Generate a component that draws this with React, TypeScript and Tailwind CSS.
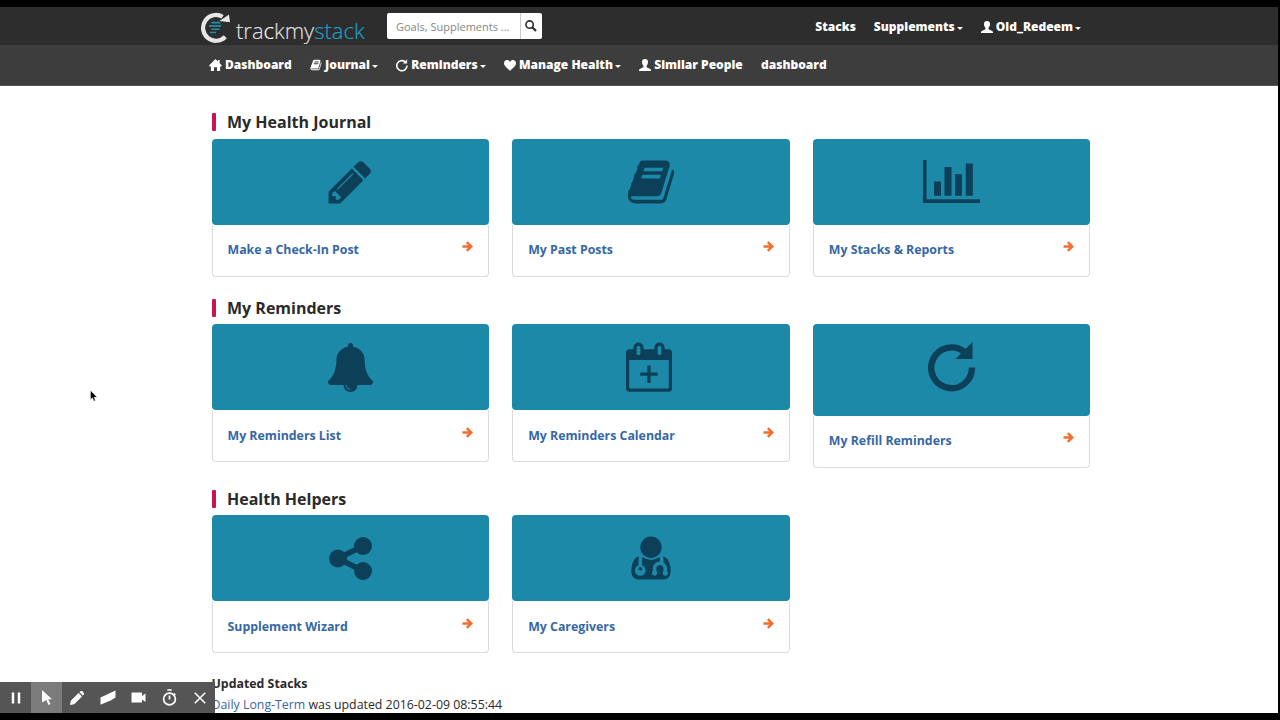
import type { ReactNode } from 'react';
import { clsx } from 'clsx';

type IconProps = { className?: string };

function Glyph({ d, className }: IconProps & { d: string }) {
  return (
    <svg viewBox="0 0 1792 1792" fill="currentColor" className={clsx('shrink-0', className)}>
      <path d={d} />
    </svg>
  );
}

const PENCIL =
  'M491 1536l91-91-235-235-91 91v107h128v128h107zm523-928q0-22-22-22-10 0-17 7l-542 542q-7 7-7 17 0 22 22 22 10 0 17-7l542-542q7-7 7-17zm-54-192l416 416-832 832h-416v-416zm683 96q0 53-37 90l-166 166-416-416 166-165q36-38 90-38 53 0 91 38l235 234q37 39 37 91z';
const BOOK =
  'M1703 478q40 57 18 129l-275 906q-19 64-76.5 107.5t-122.5 43.5h-923q-77 0-148.5-53.5t-99.5-131.5q-24-67-2-127 0-4 3-27t4-37q1-8-3-21.5t-3-19.5q2-11 8-21t16.5-23.5 16.5-23.5q23-38 45-91.5t30-91.5q3-10 .5-30t-.5-28q3-11 17-28t17-23q21-36 42-92t25-90q1-9-2.5-32t.5-28q4-13 22-30.5t22-22.5q19-26 42.5-84.5t27.5-96.5q1-8-3-25.5t-2-26.5q2-8 9-18t18-23 17-21q8-12 16.5-30.5t15-35 16-36 19.5-32 26.5-23.5 36-11.5 47.5 5.5l-1 3q38-9 51-9h761q74 0 114 56t18 130l-274 906q-36 119-71.5 153.5t-128.5 34.5h-869q-27 0-38 15-11 16-1 43 24 70 144 70h923q29 0 56-15.5t35-41.5l300-987q7-22 5-57 38 15 59 43zm-1064 2q-4 13 2 22.5t20 9.5h608q13 0 25.5-9.5t16.5-22.5l21-64q4-13-2-22.5t-20-9.5h-608q-13 0-25.5 9.5t-16.5 22.5zm-83 256q-4 13 2 22.5t20 9.5h608q13 0 25.5-9.5t16.5-22.5l21-64q4-13-2-22.5t-20-9.5h-608q-13 0-25.5 9.5t-16.5 22.5z';
const BELL =
  'M912 1696q0-16-16-16-59 0-101.5-42.5t-42.5-101.5q0-16-16-16t-16 16q0 73 51.5 124.5t124.5 51.5q16 0 16-16zm816-288q0 52-38 90t-90 38h-448q0 106-75 181t-181 75-181-75-75-181h-448q-52 0-90-38t-38-90q50-42 91-88t85-119.5 74.5-158.5 50-206 19.5-260q0-152 117-282.5t307-158.5q-8-19-8-39 0-40 28-68t68-28 68 28 28 68q0 20-8 39 190 28 307 158.5t117 282.5q0 139 19.5 260t50 206 74.5 158.5 85 119.5 91 88z';
const DOCTOR =
  'M576 1280q0 26-19 45t-45 19-45-19-19-45 19-45 45-19 45 19 19 45zm1024 121q0 121-73 192t-194 71h-874q-121 0-194-71t-73-192q0-68 5.5-131t24-138 47.5-132.5 81-103 120-60.5q-22 52-22 120v203q-58 20-93 70t-35 111q0 80 56 136t136 56 136-56 56-136q0-61-35.5-111t-92.5-70v-203q0-62 25-93 132 104 295 104t295-104q25 31 25 93v64q-106 0-181 75t-75 181v89q-32 29-32 71 0 40 28 68t68 28 68-28 28-68q0-42-32-71v-89q0-52 38-90t90-38 90 38 38 90v89q-32 29-32 71 0 40 28 68t68 28 68-28 28-68q0-42-32-71v-89q0-68-34.5-127.5t-93.5-93.5q0-10 .5-42.5t0-48-2.5-41.5-7-47-13-40q68 15 120 60.5t81 103 47.5 132.5 24 138 5.5 131zm-320-889q0 159-112.5 271.5t-271.5 112.5-271.5-112.5-112.5-271.5 112.5-271.5 271.5-112.5 271.5 112.5 112.5 271.5z';

function BarChart() {
  return (
    <svg viewBox="0 0 57 43" fill="currentColor" className="w-[57px] h-[43px]">
      <path d="M0 0h3.5v39.2H57V43H0zM11 21.5h7v14.3h-7zM21.5 7h7v28.8h-7zM32 14.3h7v21.5h-7zM42.8 3.6h7v32.2h-7z" />
    </svg>
  );
}

function CalendarPlus() {
  return (
    <svg viewBox="0 0 46 50" className="w-[46px] h-[50px] mr-[3px]">
      <rect x="1.6" y="8.8" width="42.8" height="39.4" rx="2" fill="none" stroke="currentColor" strokeWidth="3.2" />
      <path d="M2 9h42v9H2z" fill="currentColor" />
      <rect x="9" y="2.2" width="7" height="12.5" rx="3.5" fill="#1b89a7" stroke="currentColor" strokeWidth="3.2" />
      <rect x="30" y="2.2" width="7" height="12.5" rx="3.5" fill="#1b89a7" stroke="currentColor" strokeWidth="3.2" />
      <path d="M23 23.5v17.5M14.3 32.2h17.4" stroke="currentColor" strokeWidth="3.3" />
    </svg>
  );
}

function Repeat({ className }: IconProps) {
  return (
    <svg viewBox="0 0 48 50" className={className}>
      <path d="M44 25.5A20.4 20.4 0 1 1 36.5 10" fill="none" stroke="currentColor" strokeWidth="6.4" />
      <path d="M44.5 0v17H27.5z" fill="currentColor" />
    </svg>
  );
}

function Share() {
  return (
    <svg viewBox="0 0 43 43" className="w-[43px] h-[43px]">
      <path d="M34 9L9 21.5L34 34" fill="none" stroke="currentColor" strokeWidth="5.5" />
      <g fill="currentColor">
        <circle cx="34" cy="9" r="9" />
        <circle cx="9" cy="21.5" r="9" />
        <circle cx="34" cy="34" r="9" />
      </g>
    </svg>
  );
}

function HomeIcon() {
  return (
    <svg viewBox="0 0 14 13" fill="currentColor" className="w-[13px] h-[12px]">
      <path d="M7 0l2.7 2.7V1h1.8v3.5L14 7l-.9 1H12v5H8.6V9H5.4v4H2V8H.9L0 7z" />
    </svg>
  );
}

function HeartIcon() {
  return (
    <svg viewBox="0 0 12 11" fill="currentColor" className="w-[12px] h-[11px]">
      <path d="M6 10.8C4.5 9 0 6.4 0 3.2 0-.2 4.6-1 6 1.9 7.4-1 12-.2 12 3.2c0 3.2-4.5 5.8-6 7.6z" />
    </svg>
  );
}

function UserIcon() {
  return (
    <svg viewBox="0 0 12 12" fill="currentColor" className="w-[12px] h-[12px]">
      <path d="M6 0c1.9 0 3 1.3 3 3.1 0 1.7-.6 3-1.5 3.8v1.2c.4.9 2.5 1.3 3.7 2 .5.3.8.8.8 1.9H0c0-1.1.3-1.6.8-1.9 1.2-.7 3.3-1.1 3.7-2V6.900C3.600 6.100 3 4.800 3 3.100 3 1.300 4.100 0 6 0z" />
    </svg>
  );
}

function ArrowIcon() {
  return (
    <svg viewBox="0 0 12 12" className="w-[11px] h-[11px] text-[#f26f30]">
      <path d="M0.5 6H9.5M5.3 1.2L10.1 6L5.3 10.8" fill="none" stroke="currentColor" strokeWidth="2.7" />
    </svg>
  );
}

function Caret() {
  return <span className="ml-[2px] mt-[3px] border-x-[3px] border-t-[3px] border-x-transparent border-t-white" />;
}

function NavItem({ icon, label, caret }: { icon?: ReactNode; label: string; caret?: boolean }) {
  return (
    <a href="#" className="flex items-center whitespace-nowrap text-white">
      {icon && <span className="mr-[3px]">{icon}</span>}
      <span>{label}</span>
      {caret && <Caret />}
    </a>
  );
}

function Logo() {
  return (
    <a href="#" className="flex w-[187px]">
      <svg viewBox="1 0 31 32" className="w-[31px] h-[32px] mt-[4px] shrink-0">
        <path d="M26.3 25.8A12.9 12.9 0 1 1 23.6 5.8" fill="none" stroke="#e6e6e6" strokeWidth="4.2" />
        <path d="M20.5 10L31 11.2L30 3.5z" fill="#e6e6e6" />
        <path d="M12.5 11.6h9M10 14.9h12M12.5 18.2h8M11 21.5h6" stroke="#218cab" strokeWidth="1.6" />
      </svg>
      <span className="ml-[5px] mt-[8px] text-[22px] leading-[30px] font-light text-[#dedede] [-webkit-text-stroke:0.2px]">
        tra<span className="text-white">c</span>kmy<span className="text-[#1d9dc6]">stack</span>
      </span>
    </a>
  );
}

function Tile({ icon, label, tall }: { icon: ReactNode; label: string; tall?: boolean }) {
  return (
    <div>
      <div
        className={clsx(
          'flex justify-center rounded-[4px] bg-[#1b89a7] text-[#0c4058]',
          tall ? 'h-[91.5px] items-start pt-[18px]' : 'h-[86px] items-center',
        )}
      >
        {icon}
      </div>
      <div className="flex h-[52px] items-start justify-between rounded-b-[4px] border border-t-0 border-[#dcdcdc] px-[15px] pt-[15.8px]">
        <a href="#" className="text-[12.35px] leading-[20px] font-bold text-[#3567a5]">
          {label}
        </a>
        <span className="mt-px">
          <ArrowIcon />
        </span>
      </div>
    </div>
  );
}

function Section({ title, children, className }: { title: string; children: ReactNode; className?: string }) {
  return (
    <section className={className}>
      <div className="flex h-[18px] items-center">
        <span className="h-[18px] w-[4px] rounded-[1px] bg-[#c91450]" />
        <h2 className="ml-[11.5px] text-[16px] leading-[18px] font-bold text-[#2a2a2a]">{title}</h2>
      </div>
      <div className="mt-[7.6px] grid grid-cols-3 items-start gap-[23px]">{children}</div>
    </section>
  );
}

function RecorderBar() {
  return (
    <div className="absolute bottom-0 left-0 flex h-[31px] w-[215px] bg-[#555] text-white">
      <div className="flex w-[31px] items-center justify-center">
        <svg viewBox="0 0 10 12" className="h-[12px] w-[10px]">
          <path d="M2 .5v11M8 .5v11" stroke="currentColor" strokeWidth="2.5" />
        </svg>
      </div>
      <div className="flex w-[31px] items-center justify-center bg-[#7b7b7b]">
        <svg viewBox="0 0 10 15" className="h-[15px] w-[10px]" fill="currentColor">
          <path d="M0 0l10 9.3H6.2l2.3 4.7-2 .9-2.2-4.8L0 12.6z" />
        </svg>
      </div>
      <div className="flex w-[30px] items-center justify-center">
        <svg viewBox="0 0 14 14" className="h-[14px] w-[14px]" fill="currentColor">
          <path d="M0 14l.8-4.2 7.8-7.7 3.4 3.4-7.8 7.7zM9.5 1.2L10.7 0q.8-.3 1.5.1L13.9 1.9q.3.8 0 1.5L12.8 4.6z" />
        </svg>
      </div>
      <div className="flex w-[31px] items-center justify-center">
        <svg viewBox="0 0 16 15" className="h-[15px] w-[16px]" fill="currentColor">
          <path d="M.5 7.5L15.5.5v7L11 10.3.5 14.8z" />
        </svg>
      </div>
      <div className="flex w-[31px] items-center justify-center">
        <svg viewBox="0 0 15 11" className="h-[11px] w-[15px]" fill="currentColor">
          <path d="M1 .5h9.5l.5.5v3l3.5-2.5v8.5L11 7.5v3H.5V1z" />
        </svg>
      </div>
      <div className="flex w-[31px] items-center justify-center">
        <svg viewBox="0 0 15 17" className="h-[17px] w-[15px]" fill="none" stroke="currentColor" strokeWidth="1.7">
          <circle cx="7.5" cy="10" r="5.9" />
          <path d="M5.3 1h4.4M7.5 6.5v4M12 4.5l1.3 1.3" />
        </svg>
      </div>
      <div className="flex w-[30px] items-center justify-center">
        <svg viewBox="0 0 12 12" className="h-[12px] w-[12px]" stroke="currentColor" strokeWidth="1.6">
          <path d="M.8.8l10.4 10.4M11.2.8L.8 11.2" />
        </svg>
      </div>
    </div>
  );
}

export default function App() {
  return (
    <div className="h-[720px] w-[1280px] overflow-hidden bg-black pt-[7px] font-['Open_Sans',sans-serif]">
      <div className="relative h-[706px] w-[1278px] overflow-hidden bg-white">
        <header className="text-[12px] font-extrabold">
          <div className="flex h-[38px] bg-[#2d2d2d] pl-[200px]">
            <Logo />
            <div className="mt-[6px] flex h-[26px] w-[155px] overflow-hidden rounded-[2px] bg-white">
              <span className="w-[134px] whitespace-nowrap border-r border-[#ccc] pl-[9px] text-[11px] leading-[27px] font-normal text-[#858585]">
                Goals, Supplements ...
              </span>
              <svg viewBox="0 0 12 12" className="mt-[7px] ml-[4px] h-[12px] w-[12px]" fill="none" stroke="#2d2d2d">
                <circle cx="4.6" cy="4.6" r="3.7" strokeWidth="1.6" />
                <path d="M7.3 7.3l3.7 3.7" strokeWidth="2.2" />
              </svg>
            </div>
            <nav className="mr-[197px] ml-auto flex gap-[18px] pt-px">
              <NavItem label="Stacks" />
              <NavItem label="Supplements" caret />
              <NavItem icon={<UserIcon />} label="Old_Redeem" caret />
            </nav>
          </div>
          <nav className="flex h-[41px] gap-[18.3px] border-b border-[#565656] bg-[#3d3d3d] pl-[209px]">
            <NavItem icon={<HomeIcon />} label="Dashboard" />
            <NavItem icon={<Glyph d={BOOK} className="h-[12px] w-[12px]" />} label="Journal" caret />
            <NavItem icon={<Repeat className="h-[13px] w-[12px]" />} label="Reminders" caret />
            <NavItem icon={<HeartIcon />} label="Manage Health" caret />
            <NavItem icon={<UserIcon />} label="Similar People" />
            <NavItem label="dashboard" />
          </nav>
        </header>

        <main className="ml-[211.5px] w-[879px] pt-[27px]">
          <Section title="My Health Journal">
            <Tile icon={<Glyph d={PENCIL} className="h-[50px] w-[50px]" />} label="Make a Check-In Post" />
            <Tile icon={<Glyph d={BOOK} className="h-[50px] w-[50px]" />} label="My Past Posts" />
            <Tile icon={<BarChart />} label="My Stacks & Reports" />
          </Section>
          <Section title="My Reminders" className="mt-[22px]">
            <Tile icon={<Glyph d={BELL} className="h-[49px] w-[49px]" />} label="My Reminders List" />
            <Tile icon={<CalendarPlus />} label="My Reminders Calendar" />
            <Tile icon={<Repeat className="h-[50px] w-[48px]" />} label="My Refill Reminders" tall />
          </Section>
          <Section title="Health Helpers" className="mt-[22px]">
            <Tile icon={<Share />} label="Supplement Wizard" />
            <Tile icon={<Glyph d={DOCTOR} className="h-[50px] w-[50px]" />} label="My Caregivers" />
          </Section>

          <div className="mt-[19.8px] text-[12.35px] leading-[21px] text-[#2a2a2a]">
            <h3 className="font-bold">Updated Stacks</h3>
            <p>
              <a href="#" className="text-[#3567a5]">Daily Long-Term</a> was updated 2016-02-09 08:55:44
            </p>
          </div>
        </main>

        <RecorderBar />

        {/* mouse pointer */}
        <svg viewBox="0 0 8 12" className="absolute top-[383px] left-[90px] h-[12px] w-[8px]">
          <path d="M.5.5v9l2-1.8 1.4 3.4 1.5-.6L4 7.2h3z" fill="#000" stroke="#fff" strokeWidth=".4" />
        </svg>
      </div>
    </div>
  );
}
